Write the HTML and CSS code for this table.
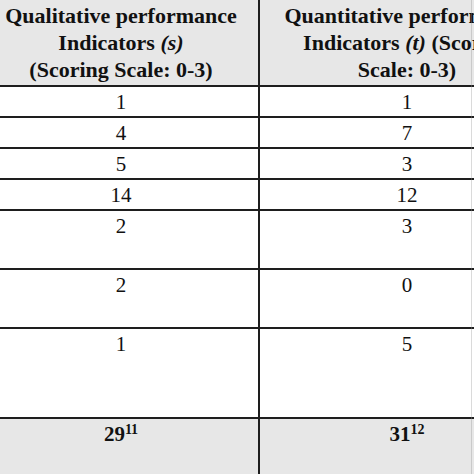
FILE: index.html
```html
<!DOCTYPE html>
<html>
<head>
<meta charset="utf-8">
<link rel="stylesheet" href="styles.css">
</head>
<body>
<div class="frame">
  <div class="grid">
    <div class="cell head left">Qualitative performance<br>Indicators <i>(s)</i><br>(Scoring Scale: 0-3)</div>
    <div class="cell head">Quantitative performance<br>Indicators <i>(t)</i> (Scoring<br>Scale: 0-3)</div>

    <div class="cell left r1">1</div><div class="cell r1">1</div>
    <div class="cell left r1">4</div><div class="cell r1">7</div>
    <div class="cell left r1">5</div><div class="cell r1">3</div>
    <div class="cell left r1">14</div><div class="cell r1">12</div>
    <div class="cell left r2">2</div><div class="cell r2">3</div>
    <div class="cell left r2">2</div><div class="cell r2">0</div>
    <div class="cell left r3">1</div><div class="cell r3">5</div>

    <div class="cell total left"><b>29<sup>11</sup></b></div>
    <div class="cell total"><b>31<sup>12</sup></b></div>
  </div>
  <div class="edge"></div>
</div>
</body>
</html>
```

FILE: styles.css
```css
html, body {
  margin: 0;
  padding: 0;
  background: #ffffff;
}

.frame {
  position: relative;
  width: 474px;
  height: 474px;
  overflow: hidden;
  background: #ffffff;
}

.grid {
  display: grid;
  grid-template-columns: 276px 294px;
  margin-left: -16px;
  width: 570px;
  font-family: "Liberation Serif", "Times New Roman", serif;
  color: #111111;
}

.cell {
  box-sizing: border-box;
  text-align: center;
  border-bottom: 2px solid #1e1e1e;
  font-size: 21px;
  line-height: 29px;
  padding-top: 1px;
}

.left {
  border-right: 2px solid #1e1e1e;
}

.head {
  height: 87px;
  background: #e7e7e7;
  font-weight: bold;
  font-size: 22px;
  line-height: 27px;
  padding-top: 2px;
}

.head i {
  font-style: italic;
}

.r1 { height: 31px; }
.r2 { height: 59px; }
.r3 { height: 90px; }

.total {
  height: 70px;
  background: #e7e7e7;
  border-bottom: none;
}

.total b {
  font-weight: bold;
}

.total sup {
  font-size: 14px;
  line-height: 0;
  vertical-align: 7px;
}

.edge {
  position: absolute;
  top: 0;
  left: 471px;
  width: 1px;
  height: 474px;
  background: rgba(150, 150, 150, 0.35);
}
```
